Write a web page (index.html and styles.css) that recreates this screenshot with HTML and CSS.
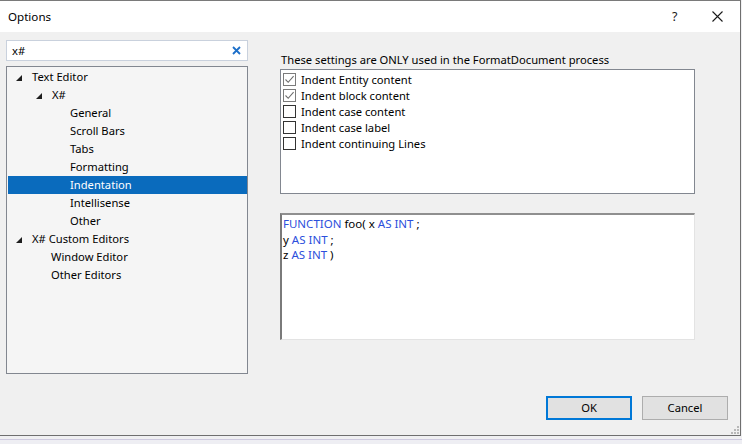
FILE: index.html
```html
<!DOCTYPE html>
<html>
<head>
<meta charset="utf-8">
<link rel="stylesheet" href="styles.css">
</head>
<body>
<div class="dialog">
  <div class="titlebar">
    <span class="title">Options</span>
    <span class="help">?</span>
    <span class="close"><svg width="11" height="11" viewBox="0 0 11 11"><path d="M0.5 0.5 L10.5 10.5 M10.5 0.5 L0.5 10.5" stroke="#1a1a1a" stroke-width="1.1" fill="none"/></svg></span>
  </div>
  <div class="content">
    <div class="main">
      <div class="left">
        <div class="search">
          <span class="search-text">x#</span>
          <svg class="search-clear" width="9" height="9" viewBox="0 0 9 9"><path d="M1 1 L8 8 M8 1 L1 8" stroke="#1c6fc9" stroke-width="1.8" fill="none"/></svg>
        </div>
        <div class="tree">
          <div class="row l0"><span class="tri"><svg width="6" height="6" viewBox="0 0 6 6"><polygon points="6,0 6,6 0,6" fill="#1e1e1e"/></svg></span>Text Editor</div>
          <div class="row l1"><span class="tri"><svg width="6" height="6" viewBox="0 0 6 6"><polygon points="6,0 6,6 0,6" fill="#1e1e1e"/></svg></span>X#</div>
          <div class="row l2">General</div>
          <div class="row l2">Scroll Bars</div>
          <div class="row l2">Tabs</div>
          <div class="row l2">Formatting</div>
          <div class="row l2 selected">Indentation</div>
          <div class="row l2">Intellisense</div>
          <div class="row l2">Other</div>
          <div class="row l0"><span class="tri"><svg width="6" height="6" viewBox="0 0 6 6"><polygon points="6,0 6,6 0,6" fill="#1e1e1e"/></svg></span>X# Custom Editors</div>
          <div class="row leaf1">Window Editor</div>
          <div class="row leaf1">Other Editors</div>
        </div>
      </div>
      <div class="right">
        <div class="label">These settings are ONLY used in the FormatDocument process</div>
        <div class="checklist">
          <div class="check-row"><span class="box checked"><svg width="11" height="11" viewBox="0 0 11 11"><path d="M1.5 5.5 L4.2 8.3 L9.6 2.2" stroke="#6e6e6e" stroke-width="1.1" fill="none"/></svg></span>Indent Entity content</div>
          <div class="check-row"><span class="box checked"><svg width="11" height="11" viewBox="0 0 11 11"><path d="M1.5 5.5 L4.2 8.3 L9.6 2.2" stroke="#6e6e6e" stroke-width="1.1" fill="none"/></svg></span>Indent block content</div>
          <div class="check-row"><span class="box"></span>Indent case content</div>
          <div class="check-row"><span class="box"></span>Indent case label</div>
          <div class="check-row"><span class="box"></span>Indent continuing Lines</div>
        </div>
        <div class="code">
          <div class="code-line"><span class="kw">FUNCTION</span> foo( x <span class="kw">AS INT</span> ;</div>
          <div class="code-line">y <span class="kw">AS INT</span> ;</div>
          <div class="code-line">z <span class="kw">AS INT</span> )</div>
        </div>
      </div>
    </div>
    <div class="footer">
      <button class="btn primary">OK</button>
      <button class="btn">Cancel</button>
    </div>
    <div class="grip">
      <span class="dot d1"></span><span class="dot d2"></span><span class="dot d3"></span>
      <span class="dot d4"></span><span class="dot d5"></span><span class="dot d6"></span>
    </div>
  </div>
</div>
<div class="below"></div>
</body>
</html>
```
FILE: styles.css
```css
html, body {
  margin: 0;
  padding: 0;
}
body {
  width: 742px;
  height: 444px;
  overflow: hidden;
  background: #f0f0f2;
  font-family: "Noto Sans", "Segoe UI", sans-serif;
  font-size: 11.2px;
  color: #000;
}
.dialog {
  width: 740px;
  height: 434px;
  border-top: 1px solid #7a7a7a;
  border-right: 1px solid #6f6f6f;
  border-bottom: 1px solid #6f6f6f;
  background: #f0f0f0;
  display: flex;
  flex-direction: column;
}
.titlebar {
  height: 31px;
  background: #ffffff;
  display: flex;
  align-items: center;
  flex-shrink: 0;
}
.title {
  margin-left: 8px;
  font-size: 11.6px;
  flex: 1;
  padding-bottom: 1px;
}
.help {
  width: 10px;
  font-size: 12.5px;
  color: #1a1a1a;
  margin-right: 30px;
}
.close {
  width: 11px;
  height: 11px;
  margin-right: 17px;
  display: flex;
}
.content {
  flex: 1;
  position: relative;
  display: flex;
  flex-direction: column;
}
.main {
  display: flex;
  padding: 8px 0 0 6px;
}
.left {
  width: 242px;
  display: flex;
  flex-direction: column;
}
.search {
  height: 19px;
  border: 1px solid #c9d1dd;
  background: #ffffff;
  display: flex;
  align-items: center;
  padding: 0 5px 0 5px;
}
.search-text {
  flex: 1;
  padding-bottom: 1px;
}
.search-clear {
  margin-right: 1px;
}
.tree {
  margin-top: 5px;
  height: 305px;
  border: 1px solid #828790;
  background: #f5f5f5;
  padding: 1px 0 0 1px;
}
.row {
  height: 18px;
  line-height: 18px;
  display: flex;
  align-items: center;
  white-space: nowrap;
}
.row.l0 { padding-left: 8px; }
.row.l1 { padding-left: 28px; }
.row.leaf1 { padding-left: 43px; }
.row.l2 { padding-left: 62px; }
.tri {
  width: 7px;
  height: 18px;
  display: flex;
  align-items: center;
  margin-right: 9px;
  padding-top: 2px;
  box-sizing: border-box;
}
.row.selected {
  background: #0a6bbd;
  color: #ffffff;
}
.right {
  margin-left: 32px;
  width: 415px;
  display: flex;
  flex-direction: column;
}
.label {
  margin-top: 12px;
  height: 16px;
  line-height: 16px;
  padding-left: 1px;
  white-space: nowrap;
}
.checklist {
  margin-top: 1px;
  height: 122px;
  border: 1px solid #828790;
  background: #ffffff;
  padding-top: 1px;
}
.check-row {
  height: 16px;
  display: flex;
  align-items: center;
  white-space: nowrap;
  padding-left: 2px;
}
.box {
  width: 11px;
  height: 11px;
  border: 1px solid #333333;
  background: #ffffff;
  margin-right: 5px;
  display: flex;
}
.box.checked {
  border-color: #7b7b7b;
}
.code {
  margin-top: 19px;
  height: 123px;
  border-style: solid;
  border-width: 2px 1px 1px 2px;
  border-color: #8f8f8f #e3e3e3 #e3e3e3 #7a7a7a;
  background: #ffffff;
  padding: 1px 0 0 1px;
  font-family: "Noto Sans", sans-serif;
  font-size: 11.5px;
}
.code-line {
  height: 15.5px;
  line-height: 15.5px;
  white-space: nowrap;
}
.kw {
  color: #2c4fdc;
}
.footer {
  margin-top: auto;
  margin-bottom: 15px;
  display: flex;
  justify-content: flex-end;
  gap: 10px;
  padding-right: 12px;
}
.btn {
  width: 86px;
  height: 24px;
  background: #e1e1e1;
  border: 1px solid #adadad;
  font-family: "Noto Sans", "Segoe UI", sans-serif;
  font-size: 11.2px;
  color: #000;
  padding: 0 0 1px 0;
  margin: 0;
}
.btn.primary {
  border: 2px solid #0078d7;
}
.grip {
  position: absolute;
  right: 1px;
  bottom: 1px;
  width: 8px;
  height: 8px;
}
.dot {
  position: absolute;
  width: 2px;
  height: 2px;
  background: #b8b8b8;
}
.d1 { right: 0; bottom: 0; }
.d2 { right: 3px; bottom: 0; }
.d3 { right: 6px; bottom: 0; }
.d4 { right: 0; bottom: 3px; }
.d5 { right: 3px; bottom: 3px; }
.d6 { right: 0; bottom: 6px; }
.below {
  height: 9px;
  border-top: 3px solid #f0f0f2;
  box-sizing: border-box;
  background: #eeeef3;
  box-shadow: inset 0 1px 0 #cfcbe0;
}
```
